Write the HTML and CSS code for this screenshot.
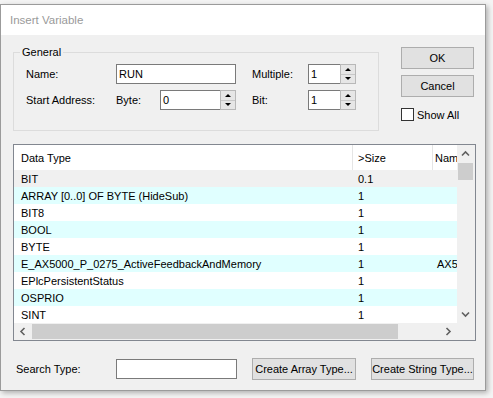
FILE: index.html
```html
<!DOCTYPE html>
<html>
<head>
<meta charset="utf-8">
<link rel="stylesheet" href="styles.css">
</head>
<body>
<div class="window">
  <div class="titlebar">Insert Variable</div>
  <div class="content">
    <div class="top">
      <fieldset class="group">
        <legend>General</legend>
        <div class="form">
          <span class="lbl">Name:</span>
          <div class="textbox name">RUN</div>
          <span class="lbl c5">Multiple:</span>
          <div class="spin c6"><div class="val">1</div><div class="btns"><span class="up"></span><span class="down"></span></div></div>
          <span class="lbl">Start Address:</span>
          <span class="lbl">Byte:</span>
          <div class="spin"><div class="val">0</div><div class="btns"><span class="up"></span><span class="down"></span></div></div>
          <span class="lbl c5">Bit:</span>
          <div class="spin c6"><div class="val">1</div><div class="btns"><span class="up"></span><span class="down"></span></div></div>
        </div>
      </fieldset>
      <div class="side">
        <button class="btn">OK</button>
        <button class="btn">Cancel</button>
        <div class="check"><span class="box"></span><span>Show All</span></div>
      </div>
    </div>

    <div class="list">
      <div class="list-main">
        <div class="row head"><div class="c1">Data Type</div><div class="c2">&gt;Size</div><div class="c3 h3">Name</div></div>
        <div class="row grey"><div class="c1">BIT</div><div class="c2">0.1</div><div class="c3"></div></div>
        <div class="row cyan"><div class="c1">ARRAY [0..0] OF BYTE (HideSub)</div><div class="c2">1</div><div class="c3"></div></div>
        <div class="row"><div class="c1">BIT8</div><div class="c2">1</div><div class="c3"></div></div>
        <div class="row cyan"><div class="c1">BOOL</div><div class="c2">1</div><div class="c3"></div></div>
        <div class="row"><div class="c1">BYTE</div><div class="c2">1</div><div class="c3"></div></div>
        <div class="row cyan"><div class="c1">E_AX5000_P_0275_ActiveFeedbackAndMemory</div><div class="c2">1</div><div class="c3">AX5000</div></div>
        <div class="row"><div class="c1">EPlcPersistentStatus</div><div class="c2">1</div><div class="c3"></div></div>
        <div class="row cyan"><div class="c1">OSPRIO</div><div class="c2">1</div><div class="c3"></div></div>
        <div class="row"><div class="c1">SINT</div><div class="c2">1</div><div class="c3"></div></div>
      </div>
      <div class="vscroll">
        <div class="arrow"><svg width="9" height="9" viewBox="0 0 9 9"><polyline points="1,6.5 4.5,3 8,6.5" fill="none" stroke="#606060" stroke-width="1.6"/></svg></div>
        <div class="vthumb"></div>
        <div class="spacer"></div>
        <div class="arrow"><svg width="9" height="9" viewBox="0 0 9 9"><polyline points="1,2.5 4.5,6 8,2.5" fill="none" stroke="#606060" stroke-width="1.6"/></svg></div>
      </div>
      <div class="hscroll">
        <div class="harrow"><svg width="9" height="9" viewBox="0 0 9 9"><polyline points="6.5,1 3,4.5 6.5,8" fill="none" stroke="#606060" stroke-width="1.6"/></svg></div>
        <div class="hthumb"></div>
        <div class="spacer"></div>
        <div class="harrow"><svg width="9" height="9" viewBox="0 0 9 9"><polyline points="2.5,1 6,4.5 2.5,8" fill="none" stroke="#606060" stroke-width="1.6"/></svg></div>
      </div>
      <div class="corner"></div>
    </div>

    <div class="bottom">
      <span class="search-label">Search Type:</span>
      <div class="textbox search"></div>
      <button class="btn wide1">Create Array Type...</button>
      <button class="btn wide2">Create String Type...</button>
    </div>
  </div>
</div>
</body>
</html>
```

FILE: styles.css
```css
html, body {
  margin: 0;
  padding: 0;
}
body {
  width: 493px;
  height: 398px;
  overflow: hidden;
  background: #f4f4f4;
  font-family: "Liberation Sans", Arial, sans-serif;
  font-size: 11px;
  color: #000;
}
.window {
  margin-top: 4px;
  width: 484px;
  height: 385px;
  border: 1px solid #9b9b9b;
  background: #f0f0f0;
  box-shadow: 2px 2px 5px rgba(0, 0, 0, 0.28);
  display: flex;
  flex-direction: column;
}
.titlebar {
  height: 30px;
  flex: none;
  background: #fff;
  padding-left: 9px;
  display: flex;
  align-items: center;
  font-size: 11.5px;
  color: #9a9a9a;
}
.content {
  padding: 11px 10px 0 12px;
  display: flex;
  flex-direction: column;
}
.top {
  display: flex;
  align-items: flex-start;
}
.group {
  margin: 0;
  width: 366px;
  min-width: 0;
  box-sizing: border-box;
  border: 1px solid #dcdcdc;
  padding: 5px 0 20px 12px;
}
.group legend {
  padding: 0 2px;
  margin-left: -6px;
  line-height: 13px;
  font-size: 11px;
}
.form {
  display: grid;
  grid-template-columns: 90px 44px 76px 16px 56px 48px;
  grid-template-rows: 20px 20px;
  row-gap: 6px;
  align-items: center;
}
.form .name {
  grid-column: 2 / 4;
}
.form .c5 {
  grid-column: 5;
}
.form .c6 {
  grid-column: 6;
}
.textbox {
  height: 20px;
  box-sizing: border-box;
  border: 1px solid #7a7a7a;
  background: #fff;
  padding-left: 2px;
  display: flex;
  align-items: center;
}
.spin {
  height: 20px;
  display: flex;
}
.spin .val {
  flex: 1;
  box-sizing: border-box;
  border: 1px solid #7a7a7a;
  border-right: none;
  background: #fff;
  padding-left: 2px;
  display: flex;
  align-items: center;
}
.spin .btns {
  width: 16px;
  flex: none;
  box-sizing: border-box;
  border: 1px solid #b8b8b8;
  background: #e6e6e6;
  display: flex;
  flex-direction: column;
}
.spin .btns span {
  flex: 1;
  display: flex;
  align-items: center;
  justify-content: center;
}
.spin .btns .up {
  border-bottom: 1px solid #c8c8c8;
}
.spin .up::after {
  content: "";
  border-left: 3px solid transparent;
  border-right: 3px solid transparent;
  border-bottom: 3px solid #000;
}
.spin .down::after {
  content: "";
  border-left: 3px solid transparent;
  border-right: 3px solid transparent;
  border-top: 3px solid #000;
}
.side {
  margin-left: 22px;
  margin-top: 1px;
  width: 73px;
  display: flex;
  flex-direction: column;
}
.btn {
  font: inherit;
  color: #000;
  height: 22px;
  background: #e1e1e1;
  border: 1px solid #adadad;
  padding: 0;
  margin: 0;
}
.side .btn + .btn {
  margin-top: 6px;
}
.check {
  margin-top: 11px;
  display: flex;
  align-items: center;
  gap: 3px;
  white-space: nowrap;
}
.box {
  width: 13px;
  height: 13px;
  box-sizing: border-box;
  border: 1px solid #333;
  background: #fff;
}
.list {
  margin-top: 13px;
  width: 463px;
  height: 197px;
  box-sizing: border-box;
  border: 1px solid #828790;
  background: #fff;
  display: grid;
  grid-template-columns: 443px 18px;
  grid-template-rows: 178px 17px;
}
.list-main {
  overflow: hidden;
}
.row {
  display: flex;
  height: 17px;
  align-items: center;
  white-space: nowrap;
}
.row.head {
  height: 25px;
  align-items: stretch;
}
.row > div {
  flex: none;
  box-sizing: border-box;
}
.c1 {
  width: 339px;
  padding-left: 7px;
}
.c2 {
  width: 80px;
  padding-left: 5px;
}
.c3 {
  width: 100px;
  padding-left: 4px;
}
.head > div {
  display: flex;
  align-items: center;
}
.head .c1,
.head .c2 {
  border-right: 1px solid #e5e5e5;
}
.head .h3 {
  padding-left: 2px;
}
.grey {
  background: #f0f0f0;
}
.cyan {
  background: #e0ffff;
}
.vscroll {
  background: #f0f0f0;
  display: flex;
  flex-direction: column;
}
.arrow {
  height: 17px;
  flex: none;
  display: flex;
  align-items: center;
  justify-content: center;
  padding-right: 1px;
}
.vthumb {
  margin: 1px 2px 0 1px;
  height: 17px;
  flex: none;
  background: #cdcdcd;
}
.spacer {
  flex: 1;
}
.hscroll {
  background: #f0f0f0;
  display: flex;
}
.harrow {
  width: 17px;
  flex: none;
  display: flex;
  align-items: center;
  justify-content: center;
}
.hthumb {
  width: 366px;
  flex: none;
  margin: 1px 0 1px 1px;
  background: #cdcdcd;
}
.corner {
  background: #f0f0f0;
}
.bottom {
  margin-top: 17px;
  display: flex;
  align-items: center;
}
.search-label {
  width: 100px;
  margin-left: 3px;
}
.textbox.search {
  width: 121px;
}
.wide1 {
  margin-left: 15px;
  width: 104px;
}
.wide2 {
  margin-left: 15px;
  width: 103px;
}
```
